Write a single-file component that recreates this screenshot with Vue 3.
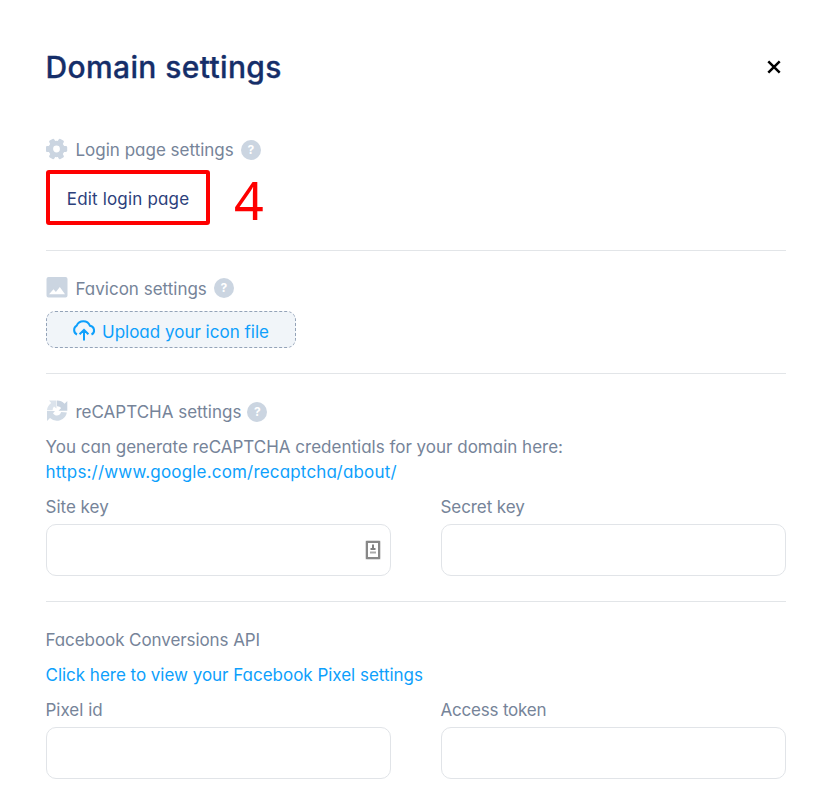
<script setup>
import { reactive } from 'vue'

const gearTeeth = [0, 60, 120, 180, 240, 300]

const form = reactive({
  siteKey: '',
  secretKey: '',
  pixelId: '',
  accessToken: ''
})
</script>

<template>
  <main class="settings">
    <header class="settings-header">
      <h1>Domain settings</h1>
      <button type="button" class="close-btn" aria-label="Close">
        <svg width="16" height="16" viewBox="0 0 16 16">
          <path d="M2.300 2.300l11.400 11.400M13.700 2.300l-11.400 11.400" />
        </svg>
      </button>
    </header>

    <section class="block login-block">
      <div class="block-title">
        <svg class="title-icon" width="22" height="22" viewBox="0 0 22 22">
          <circle class="gear-ring" cx="10.500" cy="11" r="5.800" />
          <rect
            v-for="angle in gearTeeth"
            :key="angle"
            x="16.500"
            y="8.100"
            width="4.700"
            height="5.800"
            rx="1.300"
            :transform="`rotate(${angle} 10.500 11)`"
          />
        </svg>
        <span>Login page settings</span>
        <i class="help">?</i>
      </div>
      <div class="edit-row">
        <button type="button" class="edit-btn">Edit login page</button>
        <span class="step">4</span>
      </div>
    </section>

    <section class="block favicon-block">
      <div class="block-title">
        <svg class="title-icon" width="22" height="22" viewBox="0 0 22 22">
          <path
            fill-rule="evenodd"
            d="M2.500 0h17A2 2 0 0 1 21.500 2v16.500a2 2 0 0 1-2 2h-17a2 2 0 0 1-2-2V2A2 2 0 0 1 2.500 0zM3 17.300h16l-5.200-7.200-3.900 5-2.400-2.800z"
          />
        </svg>
        <span>Favicon settings</span>
        <i class="help">?</i>
      </div>
      <button type="button" class="upload-btn">
        <svg width="24" height="22" viewBox="0 0 24 22">
          <path d="M5 15.500A5 5 0 0 1 4.700 6.600 7.200 7.200 0 0 1 18 6.800a4.600 4.600 0 0 1 1.500 8.700M12 21.500V11M7.600 15.200L12 10.800l4.400 4.400" />
        </svg>
        <span>Upload your icon file</span>
      </button>
    </section>

    <section class="block captcha-block">
      <div class="block-title">
        <svg class="title-icon" width="22" height="22" viewBox="0 0 22 22">
          <path class="tone-a" d="M3 .5h7.500v8L8 6.600A5 5 0 0 0 6.600 10.300H1A10 10 0 0 1 5.200 3z" />
          <path class="tone-b" d="M11 .5A10 10 0 0 1 18.500 3.800L21.300 1v9.800h-8.800l2.700-2.800A5 5 0 0 0 11 6.200z" />
          <path class="tone-c" d="M1 11h8l-2 2.300c2.600 3.600 6.800 2.800 8.200-1.300l5.700.4A10.200 10.200 0 0 1 4 18L1 21z" />
        </svg>
        <span>reCAPTCHA settings</span>
        <i class="help">?</i>
      </div>
      <p class="line hint">You can generate reCAPTCHA credentials for your domain here:</p>
      <a class="line link t-url">https://www.google.com/recaptcha/about/</a>
      <div class="fields">
        <label>
          <span>Site key</span>
          <div class="input-wrap">
            <input v-model="form.siteKey" type="text" />
            <svg class="autofill" width="16" height="20" viewBox="0 0 16 20">
              <rect class="halo" x="1.500" y="1.500" width="13" height="17" rx="1" />
              <rect class="frame" x="2" y="2" width="12" height="16" />
              <path d="M8 4.500v4M5.500 9h5" />
              <path class="soft" d="M5 12.500h6" />
            </svg>
          </div>
        </label>
        <label>
          <span class="t-tight">Secret key</span>
          <input v-model="form.secretKey" type="text" />
        </label>
      </div>
    </section>

    <section class="block facebook-block">
      <p class="line t-tight">Facebook Conversions API</p>
      <a class="line link">Click here to view your Facebook Pixel settings</a>
      <div class="fields">
        <label>
          <span>Pixel id</span>
          <input v-model="form.pixelId" type="text" />
        </label>
        <label>
          <span class="t-token">Access token</span>
          <input v-model="form.accessToken" type="text" />
        </label>
      </div>
    </section>
  </main>
</template>

<style>
body {
  background: #fff;
}
</style>

<style scoped>
.settings {
  box-sizing: border-box;
  width: 831px;
  height: 804px;
  padding: 47px 45px 0 46px;
  overflow: hidden;
  font-family: Inter, "Liberation Sans", sans-serif;
  font-feature-settings: "cv11";
  font-size: 17px;
  font-weight: 400;
  line-height: 24px;
  color: #768499;
}

button,
input {
  font: inherit;
  font-feature-settings: inherit;
  letter-spacing: inherit;
}

.settings-header {
  display: flex;
  justify-content: space-between;
  align-items: center;
  height: 40px;
}

h1 {
  margin: 0 0 0 -0.5px;
  font-size: 30px;
  font-weight: 500;
  line-height: 40px;
  font-feature-settings: "cv11" 0;
  letter-spacing: 0.37px;
  color: #152e69;
  -webkit-text-stroke: 0.3px #152e69;
}

.close-btn {
  display: flex;
  margin-right: 4px;
  padding: 0;
  border: 0;
  background: none;
  cursor: pointer;
}

.close-btn path {
  fill: none;
  stroke: #000;
  stroke-width: 2.5;
}

.block {
  box-sizing: border-box;
  border-bottom: 1px solid #e2e5e8;
}

.login-block {
  height: 164px;
  padding-top: 51px;
}

.favicon-block {
  height: 123px;
  padding-top: 26px;
}

.captcha-block {
  height: 228px;
  padding-top: 26px;
}

.facebook-block {
  padding-top: 26px;
  border-bottom: 0;
}

.block-title {
  display: flex;
  align-items: center;
  height: 24px;
}

.title-icon {
  margin: -3px 8px 0 -0.5px;
  fill: #cbd5e1;
}

.gear-ring {
  fill: none;
  stroke: #cbd5e1;
  stroke-width: 4.8;
}

.tone-a {
  fill: #dbe3ec;
}

.tone-b {
  fill: #c8d3e0;
}

.tone-c {
  fill: #d0dae5;
}

.help {
  width: 20px;
  height: 20px;
  margin-left: 7px;
  border-radius: 50%;
  background: #cbd5e1;
  color: #fff;
  font-size: 12px;
  font-style: normal;
  font-weight: 700;
  line-height: 20px;
  text-align: center;
}

.favicon-block .help {
  margin-top: -2px;
}

.captcha-block .help {
  margin-left: 6px;
}

.edit-row {
  display: flex;
  align-items: center;
  margin-top: 8px;
}

.edit-btn {
  width: 164px;
  height: 55px;
  padding: 2px 0 0;
  border: 4px solid #fe0000;
  border-radius: 3px;
  background: #fff;
  color: #2c407b;
  letter-spacing: 0.17px;
  white-space: nowrap;
}

.step {
  margin: 5px 0 0 24px;
  font-family: "Noto Sans", sans-serif;
  font-size: 52px;
  font-weight: 400;
  line-height: 48px;
  color: #fe0000;
}

.upload-btn {
  display: flex;
  align-items: center;
  box-sizing: border-box;
  width: 250px;
  height: 37px;
  margin-top: 10px;
  padding: 4px 0 0 25px;
  border: 1px dashed #94a3b8;
  border-radius: 9px;
  background: #f1f5f9;
  color: #0d9ffc;
  white-space: nowrap;
}

.upload-btn svg {
  margin: -4px 6px 0 0;
  fill: none;
  stroke: #0d9ffc;
  stroke-width: 2;
}

.line {
  display: block;
  height: 24px;
  margin: 0 0 0 -0.5px;
  white-space: nowrap;
}

.hint {
  margin-top: 11px;
}

.link {
  color: #0d9ffc;
  letter-spacing: -0.02px;
}

.t-url {
  letter-spacing: 0.18px;
}

.t-tight {
  letter-spacing: -0.08px;
}

.t-token {
  letter-spacing: -0.2px;
}

.captcha-block .link {
  margin-top: 1px;
}

.facebook-block .link {
  margin-top: 11px;
}

.fields {
  display: grid;
  grid-template-columns: 345px 345px;
  gap: 50px;
  margin-top: 11px;
}

.fields label {
  display: grid;
  justify-items: start;
  gap: 5px;
}

.fields label > span {
  margin-left: -0.5px;
}

.input-wrap {
  position: relative;
  height: 52px;
}

.fields input {
  box-sizing: border-box;
  width: 345px;
  height: 52px;
  padding: 0 16px;
  border: 1px solid #e1e4e8;
  border-radius: 10px;
  background: #fff;
}

.autofill {
  position: absolute;
  top: 16px;
  right: 10px;
  fill: none;
  stroke: #808080;
  stroke-width: 2;
}

.autofill .halo {
  stroke: #ddd;
  stroke-width: 3;
}

.autofill .frame {
  stroke: #888;
}

.autofill .soft {
  stroke: #aaa;
}
</style>
